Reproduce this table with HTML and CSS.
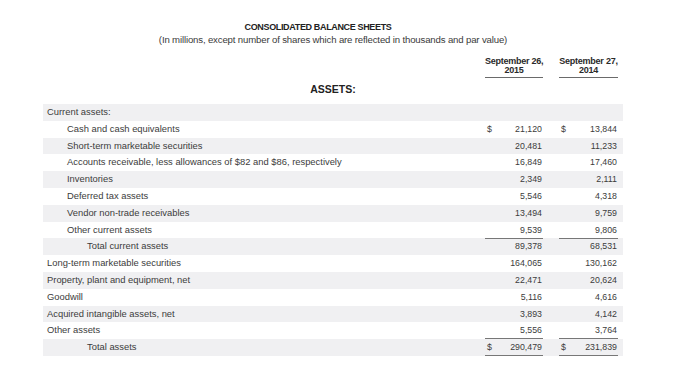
FILE: index.html
```html
<!DOCTYPE html>
<html lang="en">
<head>
<meta charset="utf-8">
<title>Consolidated Balance Sheets</title>
<link rel="stylesheet" href="styles.css">
</head>
<body>
<div class="sheet">
  <header class="head">
    <h1 class="title">CONSOLIDATED BALANCE SHEETS</h1>
    <p class="subtitle">(In millions, except number of shares which are reflected in thousands and par value)</p>
    <div class="grid dates">
      <div></div>
      <div class="date">September 26,<br>2015</div>
      <div></div>
      <div class="date">September 27,<br>2014</div>
      <div></div>
    </div>
    <h2 class="section">ASSETS:</h2>
  </header>

  <div class="table">
    <div class="grid row shade"><div class="lbl">Current assets:</div><div class="val"></div><div></div><div class="val"></div><div></div></div>
    <div class="grid row"><div class="lbl ind1">Cash and cash equivalents</div><div class="val"><span>$</span><span>21,120</span></div><div></div><div class="val"><span>$</span><span>13,844</span></div><div></div></div>
    <div class="grid row shade"><div class="lbl ind1">Short-term marketable securities</div><div class="val"><span></span><span>20,481</span></div><div></div><div class="val"><span></span><span>11,233</span></div><div></div></div>
    <div class="grid row"><div class="lbl ind1">Accounts receivable, less allowances of $82 and $86, respectively</div><div class="val"><span></span><span>16,849</span></div><div></div><div class="val"><span></span><span>17,460</span></div><div></div></div>
    <div class="grid row shade"><div class="lbl ind1">Inventories</div><div class="val"><span></span><span>2,349</span></div><div></div><div class="val"><span></span><span>2,111</span></div><div></div></div>
    <div class="grid row"><div class="lbl ind1">Deferred tax assets</div><div class="val"><span></span><span>5,546</span></div><div></div><div class="val"><span></span><span>4,318</span></div><div></div></div>
    <div class="grid row shade"><div class="lbl ind1">Vendor non-trade receivables</div><div class="val"><span></span><span>13,494</span></div><div></div><div class="val"><span></span><span>9,759</span></div><div></div></div>
    <div class="grid row"><div class="lbl ind1">Other current assets</div><div class="val rule"><span></span><span>9,539</span></div><div></div><div class="val rule"><span></span><span>9,806</span></div><div></div></div>
    <div class="grid row shade"><div class="lbl ind2">Total current assets</div><div class="val"><span></span><span>89,378</span></div><div></div><div class="val"><span></span><span>68,531</span></div><div></div></div>
    <div class="grid row"><div class="lbl">Long-term marketable securities</div><div class="val"><span></span><span>164,065</span></div><div></div><div class="val"><span></span><span>130,162</span></div><div></div></div>
    <div class="grid row shade"><div class="lbl">Property, plant and equipment, net</div><div class="val"><span></span><span>22,471</span></div><div></div><div class="val"><span></span><span>20,624</span></div><div></div></div>
    <div class="grid row"><div class="lbl">Goodwill</div><div class="val"><span></span><span>5,116</span></div><div></div><div class="val"><span></span><span>4,616</span></div><div></div></div>
    <div class="grid row shade"><div class="lbl">Acquired intangible assets, net</div><div class="val"><span></span><span>3,893</span></div><div></div><div class="val"><span></span><span>4,142</span></div><div></div></div>
    <div class="grid row"><div class="lbl">Other assets</div><div class="val rule"><span></span><span>5,556</span></div><div></div><div class="val rule"><span></span><span>3,764</span></div><div></div></div>
    <div class="grid row shade"><div class="lbl ind2">Total assets</div><div class="val dbl"><span>$</span><span>290,479</span></div><div></div><div class="val dbl"><span>$</span><span>231,839</span></div><div></div></div>
  </div>
</div>
</body>
</html>
```
FILE: styles.css
```css
* { box-sizing: border-box; }

body {
  margin: 0;
  background: #ffffff;
  font-family: "Liberation Sans", Arial, sans-serif;
  color: #3c3c3c;
}

.sheet {
  width: 580px;
  margin-left: 43px;
  padding-top: 21px;
}

.head {
  text-align: center;
}

.title {
  margin: 0;
  padding-right: 30px;
  font-size: 9px;
  line-height: 12px;
  font-weight: bold;
  letter-spacing: -0.35px;
  color: #222222;
}

.subtitle {
  margin: 2px 0 0;
  font-size: 9.6px;
  line-height: 10px;
  letter-spacing: -0.15px;
  color: #3a3a3a;
}

.grid {
  display: grid;
  grid-template-columns: 442px 58px 16px 59px 5px;
}

.dates {
  margin-top: 12px;
}

.date {
  font-size: 9px;
  line-height: 8.5px;
  font-weight: bold;
  letter-spacing: -0.25px;
  color: #2a2a2a;
  padding-bottom: 3px;
  border-bottom: 1px solid #6a6a6a;
  white-space: nowrap;
}

.section {
  margin: 5px 0 0;
  font-size: 10.5px;
  line-height: 12px;
  font-weight: bold;
  color: #222222;
}

.table {
  margin-top: 9px;
}

.row {
  height: 16.8px;
  font-size: 9.4px;
  line-height: 16px;
  letter-spacing: 0;
}

.shade {
  background: #f0f0f2;
}

.lbl {
  padding-left: 4px;
  white-space: nowrap;
}

.ind1 { padding-left: 24px; }
.ind2 { padding-left: 44px; }

.val {
  display: flex;
  justify-content: space-between;
  padding: 0 1px 0 2px;
  font-size: 8.8px;
  letter-spacing: 0;
}

.rule {
  border-bottom: 1px solid #777777;
}

.dbl {
  border-bottom: 3px double #777777;
}
```
